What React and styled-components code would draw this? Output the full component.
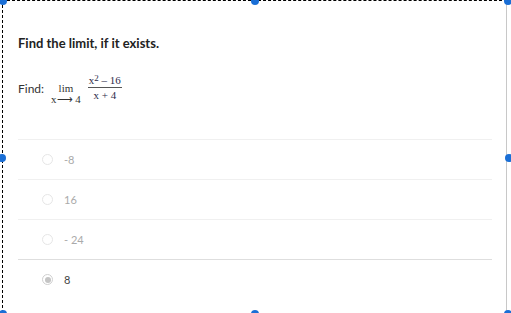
import React from 'react';
import styled, { createGlobalStyle } from 'styled-components';

const Global = createGlobalStyle`
  html, body { margin: 0; padding: 0; background: #fff; overflow: hidden; height: 313px; }
  body { font-family: Lato, "Open Sans", sans-serif; }
`;

const Frame = styled.div`
  position: relative;
  margin-left: 2px;
  width: 505px;
  height: 313px;
  border-top: 1px dashed #000;
  border-left: 1px dashed #000;
  border-right: 1px solid #c8c8c8;
  box-sizing: border-box;
`;

const Handle = styled.span`
  position: absolute;
  width: 8px;
  height: 8px;
  border-radius: 50%;
  background: #1a6fd6;
  transform: translate(-50%, -50%);
  left: ${({ $x }) => $x};
  top: ${({ $y }) => $y};
`;

const Content = styled.div`
  padding: 34px 15px 0 15px;
`;

const Title = styled.h2`
  margin: 0;
  font-size: 13px;
  font-weight: 700;
  color: #222;
  line-height: 16px;
`;

const Prompt = styled.div`
  display: flex;
  align-items: flex-start;
  margin-top: 31px;
  height: 22px;
  font-size: 12px;
  line-height: 14px;
  color: #333;
`;

const Lim = styled.div`
  display: flex;
  flex-direction: column;
  align-items: center;
  margin-left: 7px;
  font-family: "Liberation Serif", serif;
  font-size: 11px;
  color: #333;
  line-height: 11px;
  padding-top: 1px;
`;

const Frac = styled.div`
  display: flex;
  flex-direction: column;
  align-items: center;
  margin-left: 7px;
  margin-top: -7px;
  font-family: "Liberation Serif", serif;
  font-size: 11px;
  color: #2c2c4a;
  line-height: 11px;
`;

const Num = styled.span`
  padding: 0 1px 1px;
  border-bottom: 1px solid #555;
  sup { font-size: 9px; line-height: 0; vertical-align: 3px; }
`;

const Den = styled.span`
  padding-top: 2px;
`;

const Options = styled.div`
  margin-top: 35px;
  width: 474px;
`;

const Option = styled.label`
  display: flex;
  align-items: center;
  height: 39px;
  border-top: 1px solid ${({ $strong }) => ($strong ? '#dedede' : '#f0f0f0')};
  padding-left: 24px;
  font-size: 11px;
  color: ${({ $checked }) => ($checked ? '#444' : '#aaa')};
`;

const Radio = styled.span`
  width: 9px;
  height: 9px;
  border-radius: 50%;
  border: 1px solid ${({ $checked }) => ($checked ? '#d0d0d0' : '#e6e6e6')};
  background: #fff;
  margin-right: 11px;
  display: flex;
  align-items: center;
  justify-content: center;
  &::after {
    content: '';
    display: ${({ $checked }) => ($checked ? 'block' : 'none')};
    width: 6px;
    height: 6px;
    border-radius: 50%;
    background: #c4c4c4;
  }
`;

const answers = [
  { label: '-8' },
  { label: '16' },
  { label: '- 24' },
  { label: '8', checked: true, strong: true },
];

export default function App() {
  return (
    <>
      <Global />
      <Frame>
        <Handle $x="0px" $y="0px" />
        <Handle $x="252px" $y="0px" />
        <Handle $x="505px" $y="0px" />
        <Handle $x="-1px" $y="157px" />
        <Handle $x="506px" $y="157px" />
        <Handle $x="0px" $y="313px" />
        <Handle $x="252px" $y="313px" />
        <Handle $x="505px" $y="313px" />
        <Content>
          <Title>Find the limit, if it exists.</Title>
          <Prompt>
            Find:
            <Lim>
              <span>lim</span>
              <span>x&#10230; 4</span>
            </Lim>
            <Frac>
              <Num>x<sup>2</sup> &#8211; 16</Num>
              <Den>x + 4</Den>
            </Frac>
          </Prompt>
          <Options>
            {answers.map((a) => (
              <Option key={a.label} $checked={a.checked} $strong={a.strong}>
                <Radio $checked={a.checked} />
                {a.label}
              </Option>
            ))}
          </Options>
        </Content>
      </Frame>
    </>
  );
}
